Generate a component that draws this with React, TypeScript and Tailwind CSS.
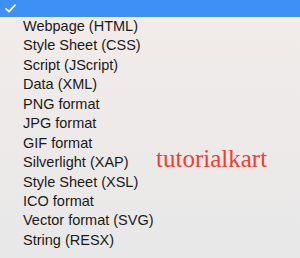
import React from "react";

const items = [
  "Webpage (HTML)",
  "Style Sheet (CSS)",
  "Script (JScript)",
  "Data (XML)",
  "PNG format",
  "JPG format",
  "GIF format",
  "Silverlight (XAP)",
  "Style Sheet (XSL)",
  "ICO format",
  "Vector format (SVG)",
  "String (RESX)",
];

export default function App() {
  return (
    <div
      className="relative w-[300px] h-[258px] overflow-hidden bg-gradient-to-b from-[#f2ecea] to-[#e8e8e8] text-[#1a1a1a]"
      style={{ fontFamily: '"Liberation Sans", Arial, sans-serif' }}
    >
      <div className="h-[17px] bg-[#3e8ff6] flex items-center pl-[5px]">
        <svg width="11" height="9" viewBox="0 0 11 9" fill="none">
          <path d="M1 4.8 L4 7.6 L10 1.2" stroke="white" strokeWidth="1.7" strokeLinecap="round" strokeLinejoin="round" />
        </svg>
      </div>
      <div className="flex flex-col">
        {items.map((t) => (
          <div key={t} className="pl-[23px] text-[14.5px] leading-[19.45px] h-[19.45px] whitespace-nowrap">
            {t}
          </div>
        ))}
      </div>
      <div
        className="absolute left-[156px] top-[146px] text-[25px] leading-[25px] text-[#fa3a2e]"
        style={{ fontFamily: '"Liberation Serif", "Times New Roman", serif' }}
      >
        tutorialkart
      </div>
    </div>
  );
}
